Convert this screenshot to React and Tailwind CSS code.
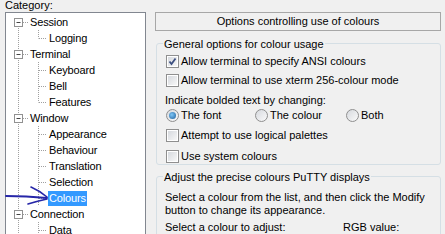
import React from 'react';

const font = { fontFamily: '"Liberation Sans", Arial, sans-serif' };

// tree rows: level 0 = parent with expander, level 1 = child
const treeRows = [
  { label: 'Session', level: 0, first: true },
  { label: 'Logging', level: 1, last: true },
  { label: 'Terminal', level: 0 },
  { label: 'Keyboard', level: 1 },
  { label: 'Bell', level: 1 },
  { label: 'Features', level: 1, last: true },
  { label: 'Window', level: 0 },
  { label: 'Appearance', level: 1 },
  { label: 'Behaviour', level: 1 },
  { label: 'Translation', level: 1 },
  { label: 'Selection', level: 1 },
  { label: 'Colours', level: 1, selected: true },
  { label: 'Connection', level: 0 },
  { label: 'Data', level: 1 },
];

const dot = { stroke: '#a0a0a0', strokeWidth: 1, strokeDasharray: '1 1' };

function Gutter({ row }) {
  if (row.level === 0) {
    return (
      <svg width="23" height="16" className="shrink-0">
        <line x1="12.5" y1={row.first ? 12 : 0} x2="12.5" y2="16" style={dot} />
        <line x1="17" y1="8.5" x2="23" y2="8.5" style={dot} />
        <rect x="8.5" y="4.5" width="8" height="8" fill="#fff" stroke="#919191" />
        <line x1="10.5" y1="8.5" x2="14.5" y2="8.5" stroke="#444" />
      </svg>
    );
  }
  return (
    <svg width="42" height="16" className="shrink-0">
      <line x1="12.5" y1="0" x2="12.5" y2="16" style={dot} />
      <line x1="32.5" y1="0" x2="32.5" y2={row.last ? 8.5 : 16} style={dot} />
      <line x1="33" y1="8.5" x2="41" y2="8.5" style={dot} />
    </svg>
  );
}

function Checkbox({ checked }) {
  return (
    <span className="w-[13px] h-[13px] border border-[#8f8f8f] bg-white p-[1px] shrink-0 flex">
      <span className="flex-1 bg-gradient-to-br from-[#d6d9de] to-[#f7f7f7] flex items-center justify-center">
        {checked && (
          <svg width="9" height="9" viewBox="0 0 9 9">
            <path d="M1.5 4.5 L3.5 7 L7.5 1.5" fill="none" stroke="#3c4f80" strokeWidth="1.8" />
          </svg>
        )}
      </span>
    </span>
  );
}

function Radio({ checked }) {
  return (
    <span className="w-[13px] h-[13px] rounded-full border border-[#8f8f8f] bg-gradient-to-br from-[#d6d9de] to-[#fafafa] shrink-0 flex items-center justify-center">
      {checked && (
        <span className="w-[7px] h-[7px] rounded-full bg-[radial-gradient(circle_at_40%_40%,#7fc7f7,#1d5d9a)]" />
      )}
    </span>
  );
}

function CheckRow({ checked, label, className }) {
  return (
    <div className={`flex items-center gap-[2px] h-[14px] ml-[9px] ${className}`}>
      <Checkbox checked={checked} />
      <span className="whitespace-nowrap">{label}</span>
    </div>
  );
}

export default function App() {
  return (
    <div
      className="relative w-[445px] h-[234px] overflow-hidden bg-[#f0f0f0] text-[11px] text-black flex"
      style={font}
    >
      {/* category tree */}
      <div className="ml-[5px] w-[141px] flex flex-col shrink-0">
        <div className="h-[12px] leading-[12px] -mt-[1px] mb-[1px] whitespace-nowrap">Category:</div>
        <div className="border border-[#828790] bg-white h-[240px] pt-[1px]">
          {treeRows.map((row) => (
            <div key={row.label} className="flex items-center h-[16px]">
              <Gutter row={row} />
              <span
                className={`px-[1px] h-[15px] leading-[15px] text-[11px] tracking-[-0.15px] whitespace-nowrap ${
                  row.selected ? 'bg-[#3399ff] text-white' : ''
                }`}
              >
                {row.label}
              </span>
            </div>
          ))}
        </div>
      </div>

      {/* options panel */}
      <div className="ml-[9px] w-[286px] flex flex-col shrink-0">
        <div className="mt-[12px] h-[19px] border border-[#a7a7a7] flex items-center justify-center">
          Options controlling use of colours
        </div>

        <fieldset className="mt-[6px] ml-[1px] border border-[#d5dfe5] rounded-[3px] pb-0">
          <legend className="ml-[6px] px-[1px] h-[14px] leading-[14px]">General options for colour usage</legend>
          <CheckRow checked label="Allow terminal to specify ANSI colours" className="mt-[4px]" />
          <CheckRow label="Allow terminal to use xterm 256-colour mode" className="mt-[5px]" />
          <div className="ml-[8px] mt-[5px] h-[14px] leading-[14px]">Indicate bolded text by changing:</div>
          <div className="flex items-center h-[14px] mt-[2px] ml-[9px]">
            <div className="flex items-center gap-[2px] w-[89px]">
              <Radio checked />
              <span>The font</span>
            </div>
            <div className="flex items-center gap-[2px] w-[91px]">
              <Radio />
              <span>The colour</span>
            </div>
            <div className="flex items-center gap-[2px]">
              <Radio />
              <span>Both</span>
            </div>
          </div>
          <CheckRow label="Attempt to use logical palettes" className="mt-[6px]" />
          <CheckRow label="Use system colours" className="mt-[7px]" />
        </fieldset>

        <fieldset className="mt-[5px] ml-[1px] border border-[#d5dfe5] rounded-[3px] h-[80px]">
          <legend className="ml-[6px] px-[1px] h-[14px] leading-[14px]">Adjust the precise colours PuTTY displays</legend>
          <div className="ml-[8px] mt-[7px] leading-[13px] whitespace-nowrap">
            Select a colour from the list, and then click the Modify
            <br />
            button to change its appearance.
          </div>
          <div className="flex ml-[8px] mt-[4px]">
            <div className="w-[176px] flex flex-col">
              <div className="h-[13px] leading-[13px]">Select a colour to adjust:</div>
              <div className="mt-[2px] h-[30px] border border-[#828790] bg-white" />
            </div>
            <div className="ml-[2px] h-[13px] leading-[13px]">RGB value:</div>
          </div>
        </fieldset>
      </div>

      {/* hand-drawn arrow annotation */}
      <svg className="absolute left-0 top-0 pointer-events-none" width="60" height="234">
        <path d="M6 196 Q26 196 47 198" fill="none" stroke="#2626a8" strokeWidth="1.8" strokeLinecap="round" />
        <path d="M31 187 Q40 191 47 197" fill="none" stroke="#2626a8" strokeWidth="1.6" strokeLinecap="round" />
        <path d="M28 204 Q38 201 47 199" fill="none" stroke="#2626a8" strokeWidth="1.6" strokeLinecap="round" />
      </svg>
    </div>
  );
}
